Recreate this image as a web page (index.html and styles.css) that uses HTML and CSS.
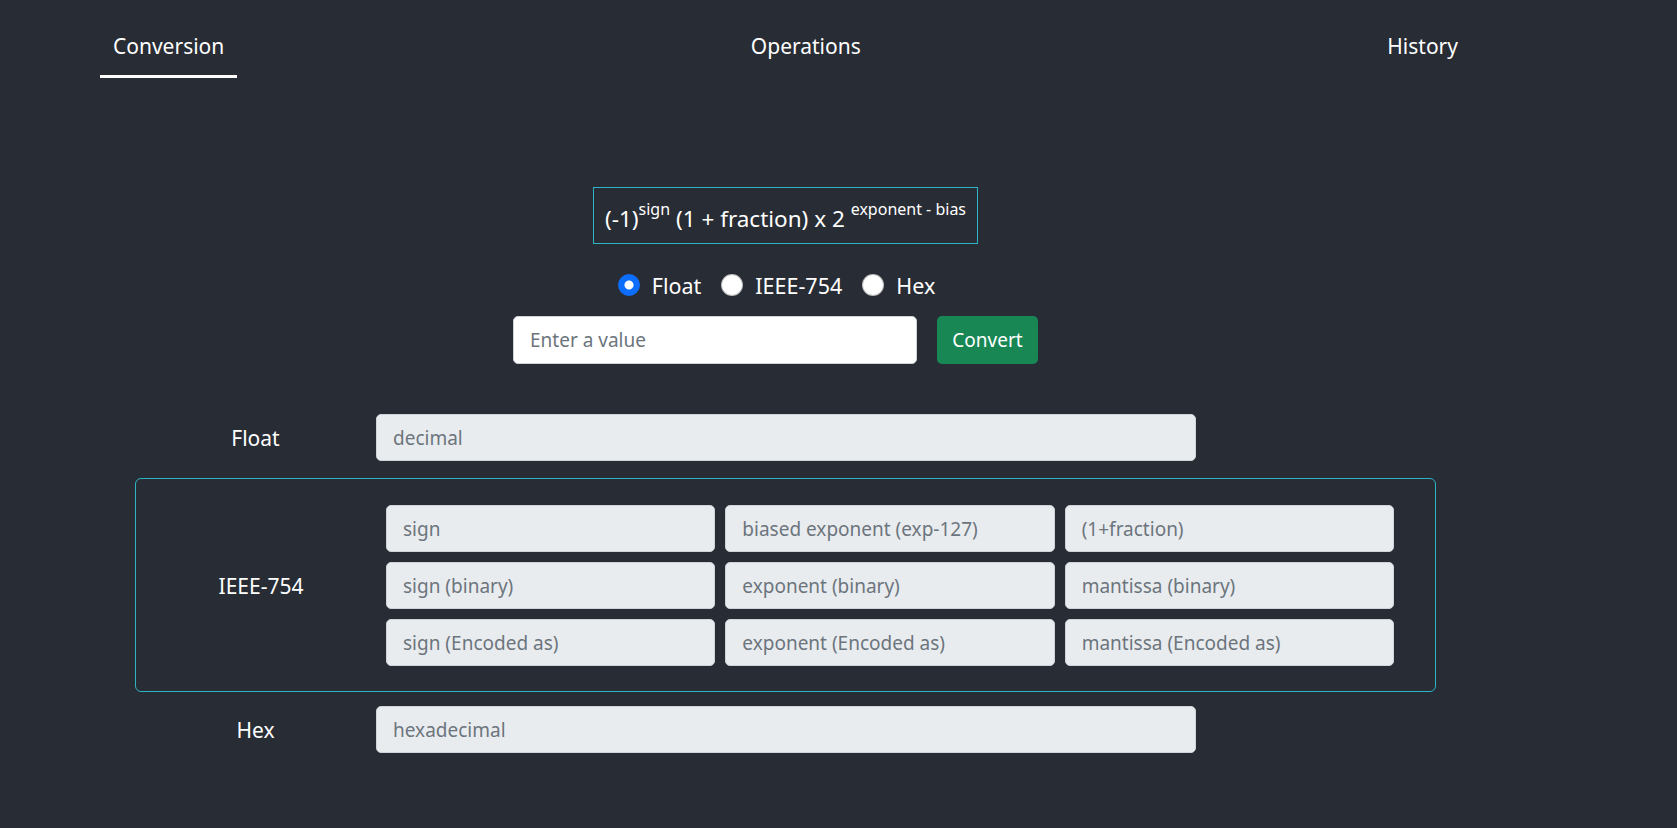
FILE: index.html
```
<!DOCTYPE html>
<html>
<head>
    <title>Floating point converter</title>
    <meta name="viewport" content="width=device-width, initial-scale=1">
    <link rel="stylesheet" href="styles.css">
</head>
<body>
    <div class="app">
        <nav class="tabs">
            <a class="tab active" href="#">Conversion</a>
            <a class="tab" href="#">Operations</a>
            <a class="tab" href="#">History</a>
        </nav>

        <div class="formula">(-1)<sup>sign</sup> (1 + fraction) x 2 <sup>exponent - bias</sup></div>

        <div class="choices">
            <label class="choice"><input type="radio" name="mode" value="float" checked> Float</label>
            <label class="choice"><input type="radio" name="mode" value="ieee"> IEEE-754</label>
            <label class="choice"><input type="radio" name="mode" value="hex"> Hex</label>
        </div>

        <div class="convert-row">
            <input class="value-input" type="text" placeholder="Enter a value">
            <button class="button_green">Convert</button>
        </div>

        <div class="fields">
            <div class="field-row">
                <p class="field-label">Float</p>
                <input class="field" type="text" placeholder="decimal" disabled>
            </div>

            <div class="ieee-box">
                <p class="field-label">IEEE-754</p>
                <div class="ieee-grid">
                    <input class="field" type="text" placeholder="sign" disabled>
                    <input class="field" type="text" placeholder="biased exponent (exp-127)" disabled>
                    <input class="field" type="text" placeholder="(1+fraction)" disabled>
                    <input class="field" type="text" placeholder="sign (binary)" disabled>
                    <input class="field" type="text" placeholder="exponent (binary)" disabled>
                    <input class="field" type="text" placeholder="mantissa (binary)" disabled>
                    <input class="field" type="text" placeholder="sign (Encoded as)" disabled>
                    <input class="field" type="text" placeholder="exponent (Encoded as)" disabled>
                    <input class="field" type="text" placeholder="mantissa (Encoded as)" disabled>
                </div>
            </div>

            <div class="field-row hex-row">
                <p class="field-label">Hex</p>
                <input class="field" type="text" placeholder="hexadecimal" disabled>
            </div>
        </div>
    </div>
</body>
</html>
```

FILE: styles.css
```
html {
	font-family: "Noto Sans", "Open Sans", sans-serif;
	background-color: #282c34;
	color: #fff;
  }
  body {
	margin: 0;
  }
  .app {
	width: 1571px;
	padding: 0 100px;
	box-sizing: border-box;
  }
  .tabs {
	display: flex;
	justify-content: space-between;
	padding-top: 30px;
  }
  .tab {
	padding: 0 13px 12px;
	font-size: 21px;
	line-height: 33px;
	color: #fff;
	text-decoration: none;
	border-bottom: 3px solid transparent;
  }
  .tab.active {
	border-bottom-color: #fff;
  }
  .formula {
	width: fit-content;
	margin: 109px auto 0;
	padding: 13px 11px 7px;
	border: 1px solid #2fb3c7;
	font-size: 22.5px;
	line-height: 35px;
	white-space: nowrap;
  }
  .formula sup {
	font-size: 16px;
	line-height: 1;
	vertical-align: 12px;
  }
  .choices {
	display: flex;
	justify-content: center;
	margin-top: 29px;
	padding-right: 18px;
	height: 24px;
	align-items: center;
  }
  .choice {
	display: inline-flex;
	align-items: center;
	gap: 12px;
	margin-right: 20px;
	font-size: 21.5px;
  }
  .choice:last-child {
	margin-right: 0;
  }
  .choice input {
	-webkit-appearance: none;
	appearance: none;
	width: 22px;
	height: 22px;
	margin: 0;
	border-radius: 50%;
	background-color: #fff;
	border: 1px solid rgba(0,0,0,.25);
  }
  .choice input:checked {
	border-color: #0d6efd;
	background: radial-gradient(circle, #fff 0 4px, #0d6efd 5px);
  }
  .convert-row {
	display: flex;
	justify-content: center;
	gap: 20px;
	margin-top: 19px;
	padding-right: 20px;
  }
  .value-input {
	width: 404px;
	height: 48px;
	box-sizing: border-box;
	padding: 0 16px;
	font-family: inherit;
	font-size: 19px;
	color: #212529;
	background-color: #fff;
	border: 1px solid #ced4da;
	border-radius: 5px;
	outline: none;
  }
  .value-input::placeholder,
  .field::placeholder {
	color: #6c757d;
  }
  .button_green {
	width: 101px;
	height: 48px;
	padding: 0;
	font-family: inherit;
	font-size: 19px;
	color: #fff;
	background-color: #198754;
	border: none;
	border-radius: 5px;
  }
  .fields {
	width: 1301px;
	margin: 50px auto 0;
  }
  .field-row {
	display: grid;
	grid-template-columns: 241px 820px;
	align-items: center;
  }
  .field-label {
	margin: 0;
	text-align: center;
	font-size: 21px;
  }
  .field {
	width: 100%;
	height: 47px;
	box-sizing: border-box;
	padding: 0 16px;
	font-family: inherit;
	font-size: 19px;
	background-color: #e9ecef;
	border: 1px solid #ced4da;
	border-radius: 5px;
  }
  .ieee-box {
	display: grid;
	grid-template-columns: 250px 1fr;
	align-items: center;
	margin-top: 17px;
	padding: 26px 41px 25px 0;
	border: 1px solid #2fb3c7;
	border-radius: 6px;
  }
  .ieee-grid {
	display: grid;
	grid-template-columns: 1fr 1fr 1fr;
	gap: 10px;
  }
  .hex-row {
	margin-top: 14px;
  }
```
